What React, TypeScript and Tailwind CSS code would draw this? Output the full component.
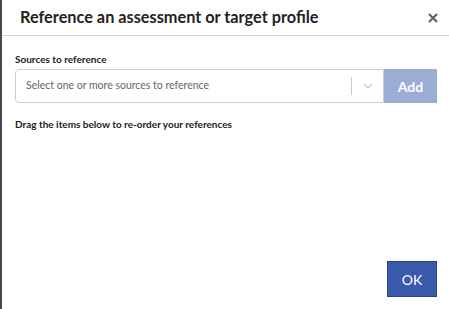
export default function App() {
  return (
    <div
      className="h-[309px] w-[449px] bg-white border-l-2 border-[#4a4a4a] flex flex-col"
      style={{ fontFamily: 'Lato, "Open Sans", sans-serif' }}
    >
      <div className="flex h-[36px] items-center justify-between border-b border-[#d4d4d4] pl-[18px] pr-[11px]">
        <h1 className="text-[16.3px] font-bold text-[#222]">Reference an assessment or target profile</h1>
        <button className="text-[#556070]">
          <svg width="10" height="10" viewBox="0 0 10 10">
            <path d="M1 1 L9 9 M9 1 L1 9" stroke="currentColor" strokeWidth="2" />
          </svg>
        </button>
      </div>
      <div className="flex flex-1 flex-col pl-[13px] pr-[12px] pt-[16px] pb-[12px]">
        <div className="text-[10px] font-bold text-[#222]">Sources to reference</div>
        <div className="mt-[2px] flex h-[34px]">
          <div className="flex flex-1 items-center rounded-l-[4px] border border-[#cccccc]">
            <span className="flex-1 pl-[10px] text-[10.5px] text-[#666]">
              Select one or more sources to reference
            </span>
            <span className="h-[18px] w-px bg-[#cccccc]" />
            <span className="flex w-[31px] items-center justify-center text-[#cccccc]">
              <svg width="10" height="6" viewBox="0 0 10 6">
                <path d="M1 1 L5 5 L9 1" stroke="currentColor" strokeWidth="1.2" fill="none" />
              </svg>
            </span>
          </div>
          <button className="w-[53px] bg-[#9badd5] text-[14px] font-bold text-white">Add</button>
        </div>
        <div className="mt-[14px] text-[10px] font-bold text-[#222]">
          Drag the items below to re-order your references
        </div>
        <div className="flex-1" />
        <div className="flex justify-end">
          <button className="h-[36px] w-[50px] border border-[#2c4585] bg-[#3a5aab] text-[14px] text-white">
            OK
          </button>
        </div>
      </div>
    </div>
  );
}
